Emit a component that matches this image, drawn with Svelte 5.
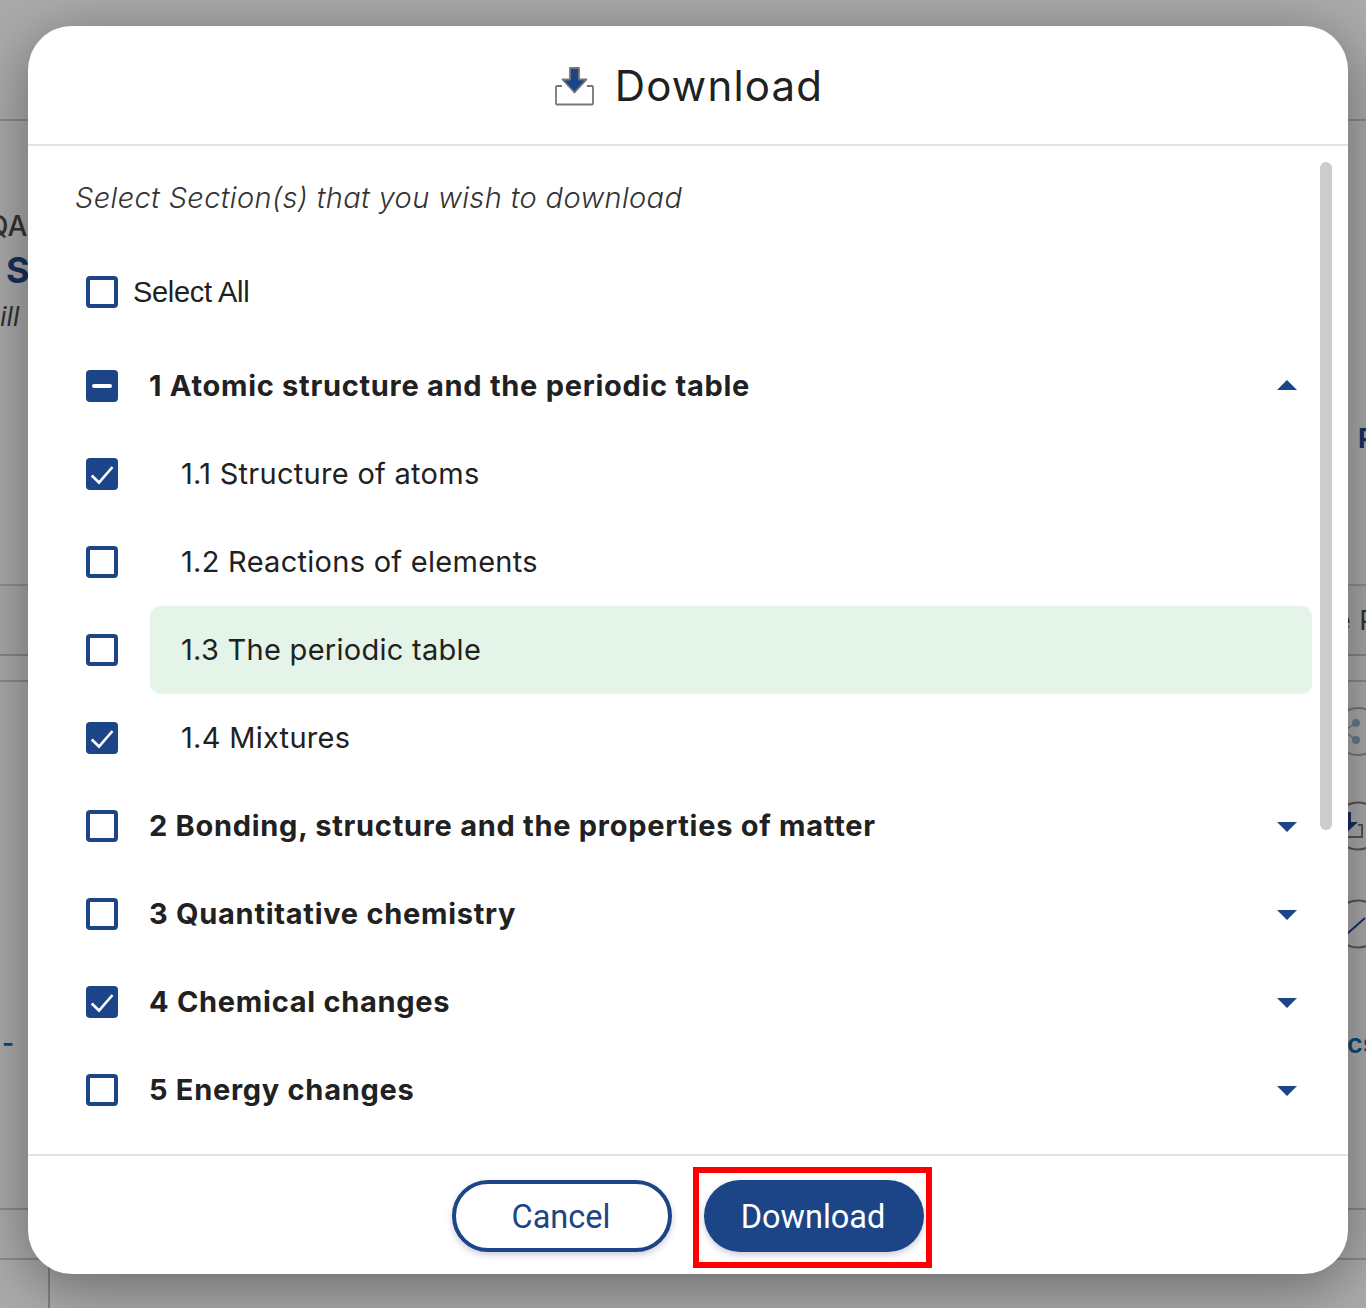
<script>
  // state: "none" | "checked" | "mixed"
  const rows = [
    { label: "1 Atomic structure and the periodic table", kind: "section", state: "mixed", open: true },
    { label: "1.1 Structure of atoms", kind: "sub", state: "checked" },
    { label: "1.2 Reactions of elements", kind: "sub", state: "none" },
    { label: "1.3 The periodic table", kind: "sub", state: "none", active: true },
    { label: "1.4 Mixtures", kind: "sub", state: "checked" },
    { label: "2 Bonding, structure and the properties of matter", kind: "section", state: "none" },
    { label: "3 Quantitative chemistry", kind: "section", state: "none" },
    { label: "4 Chemical changes", kind: "section", state: "checked" },
    { label: "5 Energy changes", kind: "section", state: "none" }
  ];
</script>

<div class="page">
  <!-- page behind the dialog -->
  <div class="behind">
    <div class="line" style="top: 119px; left: 0; width: 1366px"></div>
    <div class="band"></div>
    <div class="line" style="top: 680px; left: 0; width: 1366px"></div>
    <div class="line" style="top: 1208px; left: 0; width: 1366px"></div>
    <div class="line" style="top: 1258px; left: 0; width: 1366px"></div>
    <div class="vline"></div>
    <span class="bit qa">QA</span>
    <span class="bit s">S</span>
    <span class="bit ill">ill</span>
    <span class="bit dash">-</span>
    <span class="bit p">P</span>
    <span class="bit ep">e P</span>
    <span class="bit cs">cs</span>
    <svg class="side" width="30" height="260" viewBox="0 0 30 260" fill="none">
      <circle cx="18" cy="25.500" r="23.500" stroke="#777" stroke-width="2" />
      <circle cx="16" cy="17" r="4" fill="#667a99" />
      <circle cx="16" cy="34" r="4" fill="#667a99" />
      <path d="M16 17 L4 25 L16 34" stroke="#777" stroke-width="1.500" />
      <circle cx="18" cy="120" r="23.500" stroke="#555" stroke-width="2" />
      <path d="M0 106H11V116H18L5 128L-8 116z" fill="#17305f" />
      <path d="M18 119H22V131H0" stroke="#555" stroke-width="2" />
      <circle cx="18" cy="218" r="23.500" stroke="#555" stroke-width="2" />
      <path d="M4 224 L8 227 L25 212" stroke="#17305f" stroke-width="2" />
    </svg>
  </div>

  <div class="modal">
    <header>
      <svg class="head-icon" width="40" height="40" viewBox="0 0 40 40" fill="none">
        <path d="M7 20H2a1 1 0 0 0-1 1v16.500a1 1 0 0 0 1 1h35a1 1 0 0 0 1-1V21a1 1 0 0 0-1-1h-5" stroke="#777" stroke-width="1.800" />
        <path d="M15 2h9v11.500h7.500L19.500 26.500 7.500 13.500H15z" fill="#1c4587" stroke="#777" stroke-width="1.800" stroke-linejoin="round" />
      </svg>
      <h1>Download</h1>
    </header>

    <div class="body">
      <div class="scrollbar"></div>
      <p class="hint">Select Section(s) that you wish to download</p>

      <div class="row all">
        <span class="box"></span>
        <span class="all-label">Select All</span>
      </div>

      <div class="list">
        {#each rows as row}
          <div class="row {row.kind}">
            <span class="box" class:filled={row.state !== "none"}>
              {#if row.state === "checked"}
                <svg width="32" height="32" viewBox="0 0 32 32" fill="none">
                  <path d="M5.700 17.500 L13 24.500 L26.500 9" stroke="#fff" stroke-width="2.600" />
                </svg>
              {:else if row.state === "mixed"}
                <span class="dash-mark"></span>
              {/if}
            </span>
            <span class="label" class:active={row.active}>{row.label}</span>
            {#if row.kind === "section"}
              <svg class="caret" class:up={row.open} width="20" height="10" viewBox="0 0 20 10">
                <path d="M0 0H20L10 10z" fill="#1c4587" />
              </svg>
            {/if}
          </div>
        {/each}
      </div>
    </div>

    <footer>
      <button class="btn ghost">Cancel</button>
      <div class="callout">
        <button class="btn solid">Download</button>
      </div>
    </footer>
  </div>
</div>

<style>
  :global(body) {
    background: #aaa;
  }

  .page {
    position: relative;
    height: 1308px;
    overflow: hidden;
    font-family: Inter, sans-serif;
    color: #212121;
  }

  .behind {
    position: absolute;
    inset: 0;
    background: #ababab;
  }

  .line {
    position: absolute;
    height: 2px;
    background: #8a8a8a;
  }

  .vline {
    position: absolute;
    left: 48px;
    top: 1258px;
    width: 2px;
    height: 50px;
    background: #808080;
  }

  .band {
    position: absolute;
    left: 0;
    right: 0;
    top: 584px;
    height: 72px;
    background: #a8a8a8;
    border-top: 2px solid #8f8f8f;
    border-bottom: 2px solid #868686;
    box-sizing: border-box;
  }

  .bit {
    position: absolute;
    font-family: Inter, sans-serif;
    line-height: 1;
    white-space: nowrap;
  }

  .qa { left: -13px; top: 212px; font-size: 28px; font-weight: 500; color: #333; }
  .s { left: 6px; top: 252px; font-size: 36px; font-weight: 700; color: #17305f; }
  .ill { left: 0; top: 303px; font-size: 27px; font-style: italic; color: #333; }
  .dash { left: 2px; top: 1030px; font-size: 26px; font-weight: 600; color: #0b4a75; }
  .p { left: 1358px; top: 425px; font-size: 27px; font-weight: 700; color: #17305f; }
  .ep { left: 1335px; top: 607px; font-size: 27px; word-spacing: 1px; color: #333; }
  .cs { left: 1347px; top: 1030px; font-size: 27px; font-weight: 600; color: #0b4a75; }

  .side {
    position: absolute;
    left: 1340px;
    top: 706px;
  }

  .modal {
    position: absolute;
    left: 28px;
    top: 26px;
    width: 1320px;
    height: 1248px;
    display: flex;
    flex-direction: column;
    background: #fff;
    border-radius: 44px;
    box-shadow: 0 12px 60px rgba(0, 0, 0, 0.4);
  }

  header {
    height: 118px;
    flex-shrink: 0;
    display: flex;
    align-items: center;
    justify-content: center;
    gap: 20px;
    border-bottom: 2px solid #e2e2e2;
  }

  .head-icon {
    margin-left: 2px;
    margin-top: 1px;
  }

  h1 {
    margin: 0;
    font-size: 42px;
    font-weight: 400;
    letter-spacing: 1.200px;
  }

  .body {
    position: relative;
    flex: 1;
    min-height: 0;
    padding: 36px 36px 0 58px;
    border-bottom: 2px solid #e2e2e2;
  }

  .scrollbar {
    position: absolute;
    left: 1292px;
    top: 16px;
    width: 12px;
    height: 668px;
    border-radius: 6px;
    background: #ccc;
  }

  .hint {
    margin: 0 0 0 -11px;
    height: 32px;
    line-height: 32px;
    font-size: 29px;
    letter-spacing: 0.370px;
    font-style: italic;
    color: #333;
    font-weight: 300;
  }

  .row {
    display: flex;
    align-items: center;
    height: 88px;
  }

  .row.all {
    margin-top: 62px;
    height: 32px;
  }

  .list {
    margin-top: 34px;
  }

  .box {
    flex-shrink: 0;
    position: relative;
    display: block;
    box-sizing: border-box;
    width: 32px;
    height: 32px;
    border: 4px solid #1c4587;
    border-radius: 4px;
    background: #fff;
  }

  .box.filled {
    background: #1c4587;
  }

  .box svg {
    position: absolute;
    left: -4px;
    top: -4px;
  }

  .dash-mark {
    position: absolute;
    left: 2px;
    top: 10px;
    width: 20px;
    height: 4px;
    border-radius: 2px;
    background: #fff;
  }

  .all-label {
    margin-left: 15px;
    font-family: "Liberation Sans", sans-serif;
    font-size: 29px;
    letter-spacing: -0.300px;
  }

  .label {
    font-size: 29px;
  }

  .section .label {
    margin-left: 31px;
    margin-bottom: 2px;
    font-weight: 700;
    letter-spacing: 0.720px;
  }

  .sub .label {
    box-sizing: border-box;
    flex: 1;
    align-self: stretch;
    display: flex;
    align-items: center;
    margin-left: 32px;
    padding: 0 0 2px 31px;
    border-radius: 10px;
    font-weight: 400;
    letter-spacing: 0.280px;
  }

  .label.active {
    background: #e5f4e8;
  }

  .caret {
    margin-left: auto;
    margin-right: 15px;
    transform: translateY(1px);
  }

  .caret.up {
    transform: rotate(180deg) translateY(1px);
  }

  footer {
    flex-shrink: 0;
    height: 118px;
    display: flex;
    justify-content: center;
    align-items: flex-start;
    gap: 32px;
    padding-top: 24px;
    box-sizing: border-box;
  }

  .btn {
    width: 220px;
    height: 72px;
    padding: 2px 8px 0 6px;
    border-radius: 36px;
    font-family: Roboto, sans-serif;
    font-size: 32.500px;
    box-shadow: 0 3px 6px rgba(60, 50, 120, 0.25);
    cursor: pointer;
  }

  .ghost {
    background: #fff;
    border: 4px solid #1c4587;
    color: #1c4587;
  }

  .solid {
    display: block;
    background: #1c4587;
    border: none;
    color: #fff;
  }

  .callout {
    position: relative;
  }

  .callout::after {
    content: "";
    position: absolute;
    left: -11px;
    top: -13px;
    width: 239px;
    height: 101px;
    box-sizing: border-box;
    border: 6px solid #f00;
  }
</style>
